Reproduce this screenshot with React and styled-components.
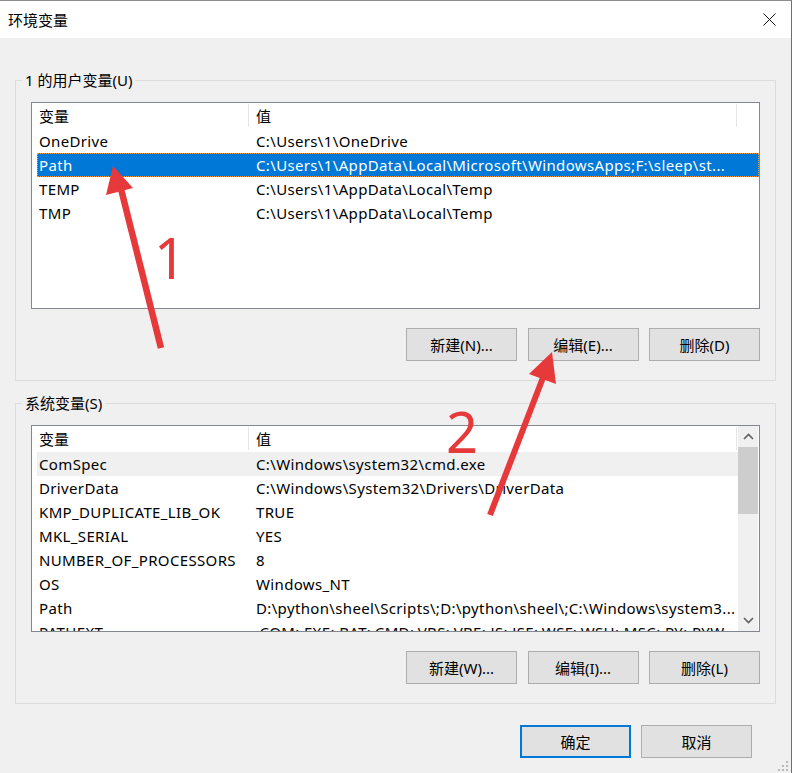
import React from 'react';
import styled, { createGlobalStyle } from 'styled-components';

const GlobalStyle = createGlobalStyle`
  html, body {
    margin: 0;
    padding: 0;
    background: #ffffff;
  }
  body {
    font-family: "Noto Sans", "Noto Sans CJK SC", sans-serif;
    font-size: 15px;
    color: #000;
  }
  * {
    box-sizing: border-box;
  }
`;

const Window = styled.div`
  position: relative;
  width: 792px;
  height: 773px;
  background: #f0f0f0;
  border-top: 1px solid #8c8c8c;
  border-right: 1px solid #6f6f6f;
  overflow: hidden;
`;

const TitleBar = styled.div`
  height: 37px;
  background: #ffffff;
  display: flex;
  align-items: center;
  justify-content: space-between;
  padding: 0 15px 0 8px;
`;

const Title = styled.div`
  font-size: 15px;
  line-height: 20px;
`;

const CloseButton = styled.div`
  width: 14px;
  height: 14px;
  display: flex;
  align-items: center;
  justify-content: center;
`;

const Body = styled.div`
  padding: 0 15px 0 15px;
`;

const Group = styled.fieldset`
  margin: ${(p) => p.$top}px 0 0 0;
  min-width: 0;
  border: 1px solid #dcdcdc;
  padding: 12px 15px 19px 15px;
`;

const Legend = styled.legend`
  margin-left: -9px;
  padding: 0 3px;
  font-size: 15px;
  line-height: 20px;
`;

const ListBox = styled.div`
  height: 207px;
  background: #ffffff;
  border: 1px solid #828790;
  display: flex;
  overflow: hidden;
`;

const ListContent = styled.div`
  flex: 1;
  min-width: 0;
  overflow: hidden;
`;

const HeaderRow = styled.div`
  display: grid;
  grid-template-columns: 217px 488px;
  height: 26px;
`;

const HeaderCell = styled.div`
  display: flex;
  align-items: center;
  padding-left: 7px;
  border-right: 1px solid #e5e5e5;
  margin: 1px 0 2px;
  white-space: nowrap;
`;

const Row = styled.div`
  display: grid;
  grid-template-columns: 212px 488px;
  height: 24px;
  margin-left: 5px;
  align-items: center;
  background: ${(p) => (p.$selected ? '#0078d7' : p.$hot ? '#f0f0f0' : 'transparent')};
  color: ${(p) => (p.$selected ? '#ffffff' : '#000000')};
  outline: ${(p) => (p.$selected ? '1px dotted #f39c3c' : 'none')};
  outline-offset: -1px;
`;

const Cell = styled.div`
  padding-left: ${(p) => (p.$value ? 7 : 2)}px;
  white-space: nowrap;
  overflow: hidden;
  line-height: 24px;
  letter-spacing: 0.35px;
`;

const Scrollbar = styled.div`
  width: 20px;
  margin-right: 1px;
  background: #f0f0f0;
  display: flex;
  flex-direction: column;
  align-items: stretch;
`;

const ScrollArrow = styled.div`
  height: ${(p) => p.$h}px;
  display: flex;
  align-items: center;
  justify-content: center;
`;

const Thumb = styled.div`
  height: 67px;
  background: #cdcdcd;
`;

const Track = styled.div`
  flex: 1;
`;

const ButtonRow = styled.div`
  display: grid;
  grid-template-columns: repeat(3, 111px);
  gap: 10.5px;
  justify-content: end;
  margin-top: 19px;
`;

const Button = styled.div`
  height: 33px;
  background: #e1e1e1;
  border: ${(p) => (p.$default ? '2px solid #0078d7' : '1px solid #adadad')};
  display: flex;
  align-items: center;
  justify-content: center;
  font-size: 15px;
  white-space: nowrap;
`;

const DialogButtons = styled.div`
  display: flex;
  justify-content: flex-end;
  gap: 10px;
  margin-top: 21px;
  padding-right: 24px;
  & > div {
    width: 111px;
  }
`;

const Grip = styled.svg`
  position: absolute;
  right: 1px;
  bottom: 0;
`;

const Annotations = styled.svg`
  position: absolute;
  left: 0;
  top: 0;
  pointer-events: none;
`;

const AnnotationNumber = styled.text`
  font-family: "Noto Sans", sans-serif;
  font-size: 56px;
  font-weight: 400;
  fill: #e5393a;
`;

const userVars = [
  ['OneDrive', 'C:\\Users\\1\\OneDrive'],
  ['Path', 'C:\\Users\\1\\AppData\\Local\\Microsoft\\WindowsApps;F:\\sleep\\st...'],
  ['TEMP', 'C:\\Users\\1\\AppData\\Local\\Temp'],
  ['TMP', 'C:\\Users\\1\\AppData\\Local\\Temp'],
];

const sysVars = [
  ['ComSpec', 'C:\\Windows\\system32\\cmd.exe'],
  ['DriverData', 'C:\\Windows\\System32\\Drivers\\DriverData'],
  ['KMP_DUPLICATE_LIB_OK', 'TRUE'],
  ['MKL_SERIAL', 'YES'],
  ['NUMBER_OF_PROCESSORS', '8'],
  ['OS', 'Windows_NT'],
  ['Path', 'D:\\python\\sheel\\Scripts\\;D:\\python\\sheel\\;C:\\Windows\\system3...'],
  ['PATHEXT', '.COM;.EXE;.BAT;.CMD;.VBS;.VBE;.JS;.JSE;.WSF;.WSH;.MSC;.PY;.PYW'],
];

const Header = () => (
  <HeaderRow>
    <HeaderCell>变量</HeaderCell>
    <HeaderCell>值</HeaderCell>
  </HeaderRow>
);

const VarRows = ({ items, selected, hot }) =>
  items.map(([name, value], i) => (
    <Row key={name + i} $selected={i === selected} $hot={i === hot}>
      <Cell>{name}</Cell>
      <Cell $value>{value}</Cell>
    </Row>
  ));

const Chevron = ({ up }) => (
  <svg width="11" height="7" viewBox="0 0 11 7">
    <path
      d={up ? 'M1 6 L5.5 1.5 L10 6' : 'M1 1 L5.5 5.5 L10 1'}
      fill="none"
      stroke="#606060"
      strokeWidth="1.6"
    />
  </svg>
);

const App = () => (
  <>
    <GlobalStyle />
    <Window>
      <TitleBar>
        <Title>环境变量</Title>
        <CloseButton>
          <svg width="13" height="13" viewBox="0 0 13 13">
            <path d="M0.5 0.5 L12.5 12.5 M12.5 0.5 L0.5 12.5" stroke="#111" strokeWidth="1" />
          </svg>
        </CloseButton>
      </TitleBar>
      <Body>
        <Group $top={32}>
          <Legend>1 的用户变量(U)</Legend>
          <ListBox>
            <ListContent>
              <Header />
              <VarRows items={userVars} selected={1} />
            </ListContent>
          </ListBox>
          <ButtonRow>
            <Button>新建(N)...</Button>
            <Button>编辑(E)...</Button>
            <Button>删除(D)</Button>
          </ButtonRow>
        </Group>

        <Group $top={12}>
          <Legend>系统变量(S)</Legend>
          <ListBox>
            <ListContent>
              <Header />
              <VarRows items={sysVars} hot={0} />
            </ListContent>
            <Scrollbar>
              <ScrollArrow $h={21}>
                <Chevron up />
              </ScrollArrow>
              <Thumb />
              <Track />
              <ScrollArrow $h={22}>
                <Chevron />
              </ScrollArrow>
            </Scrollbar>
          </ListBox>
          <ButtonRow>
            <Button>新建(W)...</Button>
            <Button>编辑(I)...</Button>
            <Button>删除(L)</Button>
          </ButtonRow>
        </Group>

        <DialogButtons>
          <Button $default>确定</Button>
          <Button>取消</Button>
        </DialogButtons>
      </Body>

      <Grip width="13" height="13" viewBox="0 0 13 13">
        {[
          [9, 1],
          [5, 5],
          [9, 5],
          [1, 9],
          [5, 9],
          [9, 9],
        ].map(([x, y]) => (
          <rect key={`${x}-${y}`} x={x} y={y} width="2" height="2" fill="#b9b9b9" />
        ))}
      </Grip>

      <Annotations width="792" height="773" viewBox="0 0 792 773">
        <line x1="161" y1="347" x2="121" y2="188" stroke="#e5393a" strokeWidth="6.5" />
        <polygon points="113,165 106,194 133,187" fill="#e5393a" />
        <line x1="490" y1="514" x2="544" y2="374" stroke="#e5393a" strokeWidth="6" />
        <polygon points="552,351 529,373 556,383" fill="#e5393a" />
        <AnnotationNumber x="154" y="278">1</AnnotationNumber>
        <AnnotationNumber x="446" y="452">2</AnnotationNumber>
      </Annotations>
    </Window>
  </>
);

export default App;
